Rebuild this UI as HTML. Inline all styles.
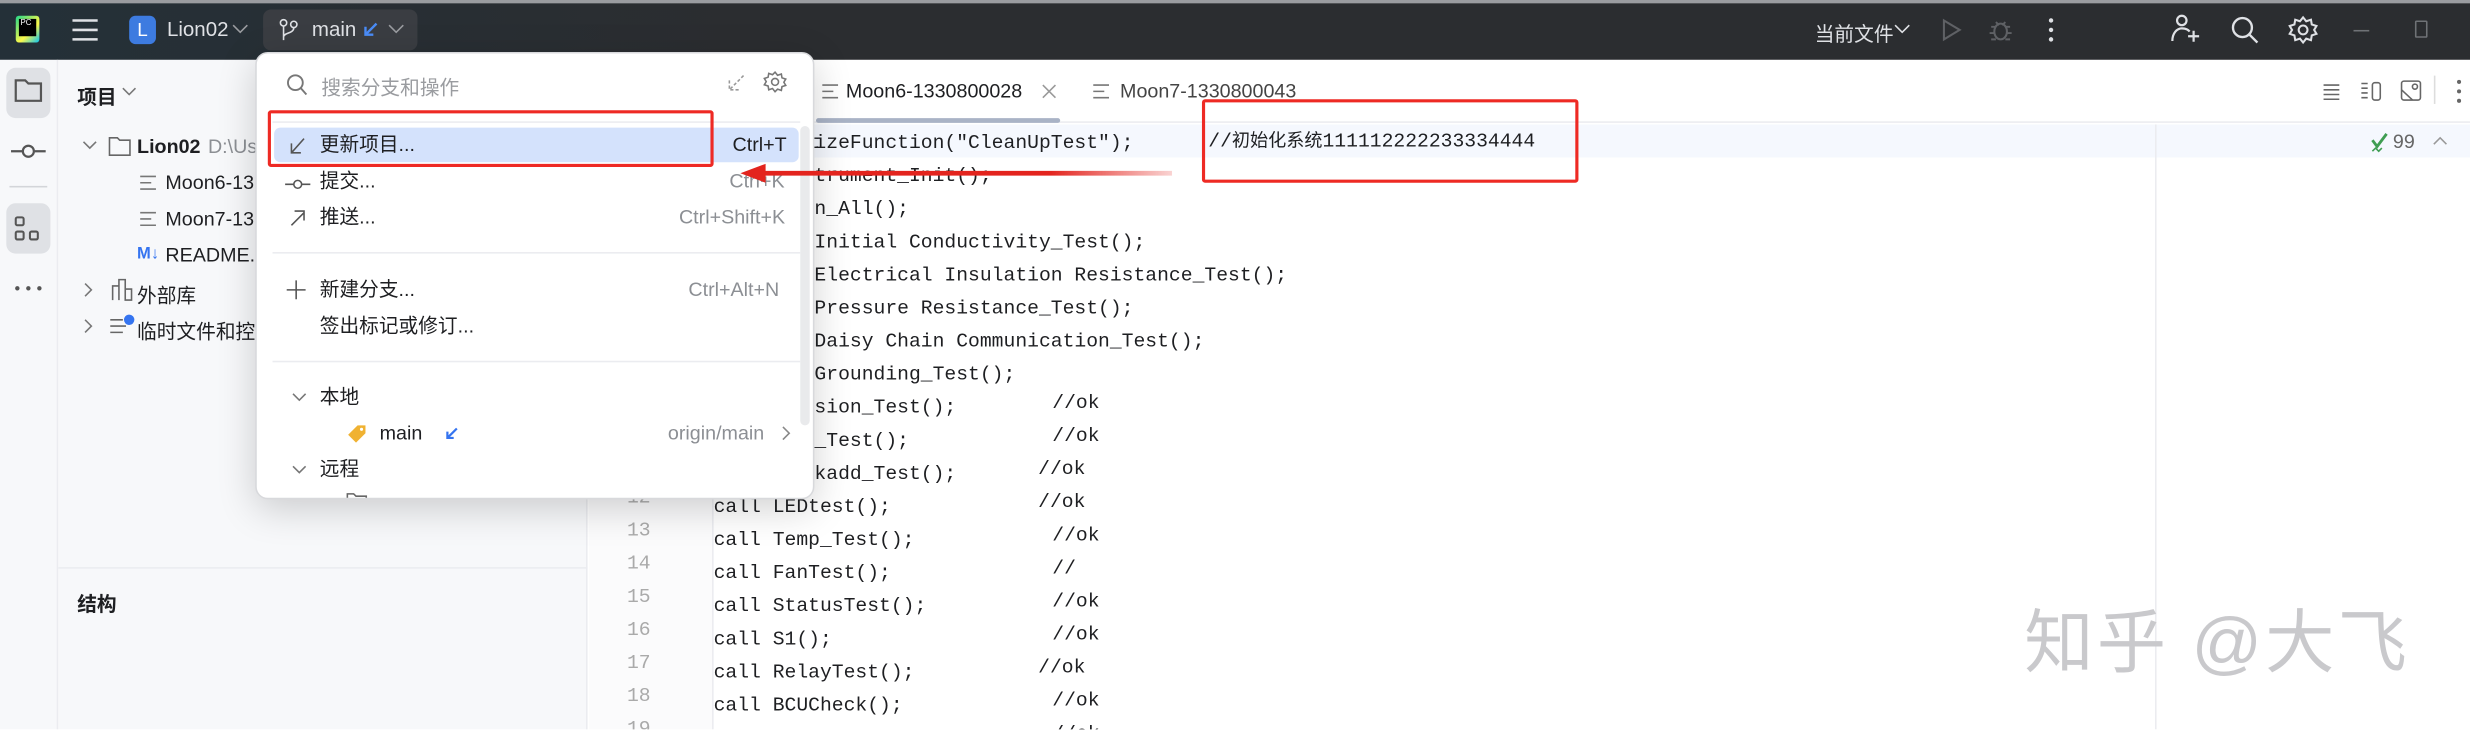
<!DOCTYPE html>
<html><head><meta charset="utf-8"><style>
*{margin:0;padding:0;box-sizing:border-box}
html,body{width:2470px;height:730px;overflow:hidden;background:#fff}
#s{position:absolute;left:0;top:0;width:1568px;height:463px;transform:scale(1.5753);transform-origin:0 0;font-family:"Liberation Sans","Noto Sans CJK SC",sans-serif;font-size:12.5px;color:#1e1f22;overflow:hidden}
.a{position:absolute;white-space:nowrap}
.mono{font-family:"Liberation Mono","Noto Sans CJK SC",monospace;font-size:12.5px}
.g{color:#8c8f94}
.it{position:absolute;left:0;width:354px;height:22px;line-height:22px}
svg{position:absolute;overflow:visible}
</style></head><body><div id="s">
<!-- title bar -->
<div class="a" style="left:0;top:0;width:1568px;height:38px;background:linear-gradient(90deg,#243038 0%,#2b2d30 30%,#2b2d30 100%);border-top:2px solid #9a9ca0"></div>
<div class="a" style="left:10px;top:10px;width:15px;height:17px;background:linear-gradient(135deg,#21d789,#fcf84a 60%,#07c3f2);border-radius:2px"></div>
<div class="a" style="left:12px;top:12px;width:11px;height:11px;background:#000;color:#fff;font-size:5px;line-height:6px;padding-left:1px">PC</div>
<svg style="left:46px;top:12px" width="16" height="14"><path d="M0 1h16M0 7h16M0 13h16" stroke="#dfe1e5" stroke-width="1.6"/></svg>
<div class="a" style="left:82px;top:10px;width:17px;height:18px;background:#3d7be0;border-radius:4px;color:#fff;font-size:12px;text-align:center;line-height:18px">L</div>
<div class="a" style="left:106px;top:11px;color:#dfe1e5;font-size:13px">Lion02</div>
<svg style="left:148px;top:16px" width="9" height="6"><path d="M0 0l4.5 4.5L9 0" fill="none" stroke="#9a9ca0"/></svg>
<div class="a" style="left:167px;top:6px;width:98px;height:26px;background:#3a3d42;border-radius:5px"></div>
<svg style="left:177px;top:12px" width="12" height="14"><circle cx="3" cy="2.5" r="2" fill="none" stroke="#dfe1e5"/><circle cx="9.5" cy="3.5" r="2" fill="none" stroke="#dfe1e5"/><path d="M3 4.5v9M9.5 5.5c0 4-6.5 3-6.5 6" fill="none" stroke="#dfe1e5"/></svg>
<div class="a" style="left:198px;top:11px;color:#dfe1e5;font-size:13px">main</div>
<svg style="left:231px;top:14px" width="9" height="9"><path d="M8 1L1 8M1 3v5h5" fill="none" stroke="#4a8cf7" stroke-width="1.5"/></svg>
<svg style="left:247px;top:16px" width="9" height="6"><path d="M0 0l4.5 4.5L9 0" fill="none" stroke="#9a9ca0"/></svg>
<div class="a" style="left:1152px;top:11px;color:#dfe1e5;font-size:12.5px">当前文件</div>
<svg style="left:1203px;top:16px" width="9" height="6"><path d="M0 0l4.5 4.5L9 0" fill="none" stroke="#dfe1e5"/></svg>
<svg style="left:1233px;top:12px" width="12" height="14"><path d="M1 1l10 6-10 6z" fill="none" stroke="#5f6165" stroke-width="1.3"/></svg>
<svg style="left:1263px;top:11px" width="14" height="16"><ellipse cx="7" cy="9" rx="4" ry="5" fill="none" stroke="#5f6165" stroke-width="1.3"/><path d="M1 6h3M10 6h3M0 10h3M11 10h3M1 14h3M10 14h3M4 3l2 2M10 3l-2 2" stroke="#5f6165" stroke-width="1.2"/></svg>
<svg style="left:1300px;top:11px" width="4" height="16"><circle cx="2" cy="2" r="1.4" fill="#dfe1e5"/><circle cx="2" cy="8" r="1.4" fill="#dfe1e5"/><circle cx="2" cy="14" r="1.4" fill="#dfe1e5"/></svg>
<svg style="left:1378px;top:9px" width="18" height="20"><circle cx="7" cy="4" r="3" fill="none" stroke="#dfe1e5" stroke-width="1.4"/><path d="M1 17c0-5 3-8 6-8s4 1 5 2M11 14h7M14.5 10.5v7" fill="none" stroke="#dfe1e5" stroke-width="1.4"/></svg>
<svg style="left:1416px;top:10px" width="18" height="18"><circle cx="7.5" cy="7.5" r="6" fill="none" stroke="#dfe1e5" stroke-width="1.5"/><path d="M12 12l5 5" stroke="#dfe1e5" stroke-width="1.5"/></svg>
<svg style="left:1453px;top:10px" width="18" height="18"><path d="M9 1l2 2.5 3-1 .5 3 3 1-1.5 2.5 1.5 2.5-3 1-.5 3-3-1L9 17l-2-2.5-3 1-.5-3-3-1L2 9 .5 6.5l3-1 .5-3 3 1z" fill="none" stroke="#dfe1e5" stroke-width="1.3"/><circle cx="9" cy="9" r="2.8" fill="none" stroke="#dfe1e5" stroke-width="1.3"/></svg>
<div class="a" style="left:1494px;top:19px;width:10px;height:1px;background:#6f7276"></div>
<div class="a" style="left:1533px;top:13px;width:8px;height:11px;border:1px solid #6f7276;border-radius:1px"></div>
<!-- left tool strip -->
<div class="a" style="left:0;top:38px;width:37px;height:425px;background:#f7f8fa;border-right:1px solid #ebecf0"></div>
<div class="a" style="left:4px;top:43px;width:28px;height:32px;background:#dfe1e5;border-radius:6px"></div>
<svg style="left:9px;top:50px" width="18" height="15"><path d="M1 1h6l2 2h8v11H1z" fill="none" stroke="#555" stroke-width="1.4"/></svg>
<svg style="left:7px;top:91px" width="22" height="10"><circle cx="11" cy="5" r="3.5" fill="none" stroke="#555" stroke-width="1.4"/><path d="M0 5h7M15 5h7" stroke="#555" stroke-width="1.4"/></svg>
<div class="a" style="left:6px;top:118px;width:24px;height:1px;background:#d3d5d9"></div>
<div class="a" style="left:4px;top:129px;width:28px;height:32px;background:#dfe1e5;border-radius:6px"></div>
<svg style="left:9px;top:137px" width="17" height="17"><rect x="1" y="1" width="5" height="5" rx="1" fill="none" stroke="#555" stroke-width="1.3"/><rect x="1" y="10" width="5" height="5" rx="1" fill="none" stroke="#555" stroke-width="1.3"/><rect x="10" y="10" width="5" height="5" rx="1" fill="none" stroke="#555" stroke-width="1.3"/></svg>
<svg style="left:9px;top:181px" width="18" height="4"><circle cx="2" cy="2" r="1.4" fill="#555"/><circle cx="9" cy="2" r="1.4" fill="#555"/><circle cx="16" cy="2" r="1.4" fill="#555"/></svg>
<!-- project panel -->
<div class="a" style="left:37px;top:38px;width:336px;height:425px;background:#f7f8fa;border-right:1px solid #ebecf0"></div>
<div class="a" style="left:37px;top:360px;width:336px;height:1px;background:#ebecf0"></div>
<div class="a" style="left:49px;top:51px;font-weight:bold;font-size:12.5px">项目</div>
<svg style="left:78px;top:56px" width="8" height="5"><path d="M0 0l4 4 4-4" fill="none" stroke="#777"/></svg>
<div class="a" style="left:49px;top:373px;font-weight:bold">结构</div>
<svg style="left:53px;top:90px" width="8" height="5"><path d="M0 0l4 4 4-4" fill="none" stroke="#777"/></svg>
<svg style="left:69px;top:87px" width="14" height="12"><path d="M.5.5h5l1.5 1.5h6.5v9.5H.5z" fill="none" stroke="#666"/></svg>
<div class="a" style="left:87px;top:86px;font-weight:bold">Lion02</div><div class="a g" style="left:132px;top:86px">D:\Us</div>
<svg style="left:89px;top:111px" width="10" height="10"><path d="M0 1h10M0 5h7M0 9h10" stroke="#777"/></svg><div class="a" style="left:105px;top:109px">Moon6-13</div>
<svg style="left:89px;top:134px" width="10" height="10"><path d="M0 1h10M0 5h7M0 9h10" stroke="#777"/></svg><div class="a" style="left:105px;top:132px">Moon7-13</div>
<div class="a" style="left:87px;top:155px;color:#3574f0;font-weight:bold;font-size:10.5px">M↓</div><div class="a" style="left:105px;top:155px">README.r</div>
<svg style="left:54px;top:180px" width="5" height="8"><path d="M0 0l4 4-4 4" fill="none" stroke="#777"/></svg>
<svg style="left:71px;top:177px" width="13" height="14"><path d="M.5 13.5v-9h4v9M4.5 13.5V.5h4v13M8.5 13.5v-7h4v7z" fill="none" stroke="#666"/></svg>
<div class="a" style="left:87px;top:177px">外部库</div>
<svg style="left:54px;top:203px" width="5" height="8"><path d="M0 0l4 4-4 4" fill="none" stroke="#777"/></svg>
<svg style="left:70px;top:199px" width="16" height="14"><path d="M0 4h8M0 8h10M0 12h8" stroke="#666"/><circle cx="12" cy="4" r="3.3" fill="#3574f0"/></svg>
<div class="a" style="left:87px;top:200px">临时文件和控制</div>
<!-- editor -->
<div class="a" style="left:374px;top:38px;width:1194px;height:40px;background:#fff;border-bottom:1px solid #ebecf0"></div>
<svg style="left:522px;top:53px" width="10" height="10"><path d="M0 1h10M0 5h7M0 9h10" stroke="#777"/></svg>
<div class="a" style="left:537px;top:51px">Moon6-1330800028</div>
<svg style="left:662px;top:54px" width="8" height="8"><path d="M0 0l8 8M8 0L0 8" stroke="#999"/></svg>
<div class="a" style="left:518px;top:75px;width:155px;height:3px;background:#a9b3c6;border-radius:2px"></div>
<svg style="left:694px;top:53px" width="10" height="10"><path d="M0 1h10M0 5h7M0 9h10" stroke="#777"/></svg>
<div class="a" style="left:711px;top:51px;color:#444">Moon7-1330800043</div>
<svg style="left:1475px;top:53px" width="10" height="11"><path d="M0 1h10M0 4h10M0 7h10M0 10h10" stroke="#666"/></svg>
<svg style="left:1499px;top:52px" width="13" height="12"><path d="M0 1h4M0 4h4M0 7h4M0 10h4" stroke="#666"/><rect x="7" y=".5" width="5" height="11" rx="1.5" fill="none" stroke="#666"/></svg>
<svg style="left:1524px;top:51px" width="13" height="13"><rect x=".5" y=".5" width="12" height="12" rx="1.5" fill="none" stroke="#666"/><path d="M.5 6l7 6.5" stroke="#666"/><circle cx="9" cy="4" r="1.6" fill="none" stroke="#666"/></svg>
<div class="a" style="left:1545px;top:48px;width:1px;height:18px;background:#ddd"></div>
<svg style="left:1559px;top:50px" width="4" height="16"><circle cx="2" cy="2" r="1.3" fill="#666"/><circle cx="2" cy="8" r="1.3" fill="#666"/><circle cx="2" cy="14" r="1.3" fill="#666"/></svg>
<div class="a" style="left:374px;top:79px;width:79px;height:384px;background:#fbfbfc;border-right:1px solid #ebecf0"></div>
<div class="a" style="left:453px;top:79px;width:1115px;height:21px;background:#f5f8fe"></div>
<div class="a" style="left:1368px;top:79px;width:1px;height:384px;background:#ebecf0"></div>
<svg style="left:1505px;top:84px" width="11" height="13"><path d="M1 5l3 4 6-8" fill="none" stroke="#3f9d52" stroke-width="1.8"/><path d="M1 12l2-2 2 2 2-2" fill="none" stroke="#3f9d52"/></svg>
<div class="a" style="left:1519px;top:83px;color:#666">99</div>
<svg style="left:1545px;top:87px" width="8" height="5"><path d="M0 4.5l4-4 4 4" fill="none" stroke="#999"/></svg>
<div class="a mono g" style="left:398px;top:309px;color:#aaa">12</div>
<div class="a mono" style="left:398px;top:330px;color:#aaa">13</div>
<div class="a mono" style="left:398px;top:351px;color:#aaa">14</div>
<div class="a mono" style="left:398px;top:372px;color:#aaa">15</div>
<div class="a mono" style="left:398px;top:393px;color:#aaa">16</div>
<div class="a mono" style="left:398px;top:414px;color:#aaa">17</div>
<div class="a mono" style="left:398px;top:435px;color:#aaa">18</div>
<div class="a mono" style="left:398px;top:456px;color:#aaa">19</div>
<div class="a mono" style="left:453px;top:81px;line-height:21px">call Init<br>call Ins<br>call Ru<br>call Run <br>call Run <br>call Run <br>call Run <br>call Run <br>call Ten<br>call Ir<br>call Che<br>call LEDtest();<br>call Temp_Test();<br>call FanTest();<br>call StatusTest();<br>call S1();<br>call RelayTest();<br>call BCUCheck();<br>call VoltageCal();</div>
<div class="a mono" style="left:517px;top:81px;line-height:21px;background:#fff0">izeFunction("CleanUpTest");<br>trument_Init();<br>n_All();<br>Initial Conductivity_Test();<br>Electrical Insulation Resistance_Test();<br>Pressure Resistance_Test();<br>Daisy Chain Communication_Test();<br>Grounding_Test();<br>sion_Test();<br>_Test();<br>kadd_Test();</div>
<div class="a mono" style="left:668px;top:249px">//ok</div>
<div class="a mono" style="left:668px;top:270px">//ok</div>
<div class="a mono" style="left:659px;top:291px">//ok</div>
<div class="a mono" style="left:659px;top:312px">//ok</div>
<div class="a mono" style="left:668px;top:333px">//ok</div>
<div class="a mono" style="left:668px;top:354px">//</div>
<div class="a mono" style="left:668px;top:375px">//ok</div>
<div class="a mono" style="left:668px;top:396px">//ok</div>
<div class="a mono" style="left:659px;top:417px">//ok</div>
<div class="a mono" style="left:668px;top:438px">//ok</div>
<div class="a mono" style="left:668px;top:459px">//ok</div>
<div class="a mono" style="left:767px;top:81px">//<span style="font-size:11.5px">初始化系统</span>111112222233334444</div>
<div class="a" style="left:1285px;top:372px;font-size:44px;color:#c9c9cc;letter-spacing:2px">知乎 @大飞</div>
<!-- popup -->
<div class="a" style="left:162px;top:33px;width:355px;height:284px;background:#fff;border:1px solid #d8d9dc;border-radius:8px;box-shadow:0 6px 24px rgba(0,0,0,.18);overflow:hidden">
 <svg style="left:19px;top:13px" width="13" height="14"><circle cx="5.5" cy="5.5" r="4.7" fill="none" stroke="#777" stroke-width="1.2"/><path d="M9 9l3.5 4" stroke="#777" stroke-width="1.2"/></svg>
 <div class="a" style="left:41px;top:11px;color:#9a9ca0">搜索分支和操作</div>
 <svg style="left:299px;top:13px" width="11" height="11"><path d="M10 1L1 10M1 4v6h6" fill="none" stroke="#999" stroke-dasharray="2 1.3"/></svg>
 <svg style="left:322px;top:11px" width="14" height="14"><path d="M7 .8l1.6 2 2.4-.8.4 2.4 2.4.8-1.2 2 1.2 2-2.4.8-.4 2.4-2.4-.8L7 13.2l-1.6-2-2.4.8-.4-2.4-2.4-.8 1.2-2-1.2-2 2.4-.8.4-2.4 2.4.8z" fill="none" stroke="#777"/><circle cx="7" cy="7" r="2.2" fill="none" stroke="#777"/></svg>
 <div class="a" style="left:10px;top:43px;width:335px;height:1px;background:#ebecf0"></div>
 <div class="a" style="left:11px;top:47px;width:333px;height:22px;background:#d4e2fc;border-radius:4px"></div>
 <div class="a" style="left:345px;top:46px;width:6px;height:190px;background:#e9eaec;border-radius:3px"></div>
 <div class="it" style="top:47px"><svg style="left:21px;top:6px" width="10" height="11"><path d="M9 1L1 10M1 4v6h6" fill="none" stroke="#555"/></svg><span class="a" style="left:40px">更新项目...</span><span class="a" style="left:302px">Ctrl+T</span></div>
 <div class="it" style="top:70px"><svg style="left:18px;top:10px" width="16" height="6"><circle cx="8" cy="3" r="2.5" fill="none" stroke="#555"/><path d="M0 3h5.5M10.5 3h5.5" stroke="#555"/></svg><span class="a" style="left:40px">提交...</span><span class="a g" style="left:300px">Ctrl+K</span></div>
 <div class="it" style="top:93px"><svg style="left:21px;top:6px" width="10" height="11"><path d="M1 10L9 2M3 1h6v6" fill="none" stroke="#555"/></svg><span class="a" style="left:40px">推送...</span><span class="a g" style="left:268px">Ctrl+Shift+K</span></div>
 <div class="a" style="left:10px;top:126px;width:335px;height:1px;background:#ebecf0"></div>
 <div class="it" style="top:139px"><svg style="left:19px;top:5px" width="12" height="12"><path d="M6 0v12M0 6h12" stroke="#555"/></svg><span class="a" style="left:40px">新建分支...</span><span class="a g" style="left:274px">Ctrl+Alt+N</span></div>
 <div class="it" style="top:162px"><span class="a" style="left:40px">签出标记或修订...</span></div>
 <div class="a" style="left:10px;top:195px;width:335px;height:1px;background:#ebecf0"></div>
 <div class="it" style="top:207px"><svg style="left:23px;top:9px" width="8" height="5"><path d="M0 0l4 4 4-4" fill="none" stroke="#777"/></svg><span class="a" style="left:40px">本地</span></div>
 <div class="it" style="top:230px"><svg style="left:57px;top:5px" width="13" height="13"><path d="M7 1h5v5l-6 6-5-5z" fill="#f0b232"/><circle cx="9.5" cy="3.5" r="1" fill="#fff"/></svg><span class="a" style="left:78px">main</span><svg style="left:120px;top:7px" width="8" height="8"><path d="M7 1L1 7M1 3v4h4" fill="none" stroke="#3574f0" stroke-width="1.4"/></svg><span class="a g" style="left:261px">origin/main</span><svg style="left:334px;top:7px" width="5" height="8"><path d="M0 0l4 4-4 4" fill="none" stroke="#888"/></svg></div>
 <div class="it" style="top:253px"><svg style="left:23px;top:9px" width="8" height="5"><path d="M0 0l4 4 4-4" fill="none" stroke="#777"/></svg><span class="a" style="left:40px">远程</span></div>
 <svg style="left:57px;top:279px" width="13" height="8"><path d="M.5 7V.5h4l1.5 1.5h6.5V7" fill="none" stroke="#666"/></svg>
</div>
<!-- annotations -->
<div class="a" style="left:170px;top:70px;width:283px;height:36px;border:2.5px solid #ee2a24;border-radius:2px"></div>
<div class="a" style="left:763px;top:63px;width:239px;height:53px;border:2.5px solid #ee2a24;border-radius:2px"></div>
<svg style="left:470px;top:103px" width="275" height="14"><defs><linearGradient id="lg" x1="0" x2="1"><stop offset="0" stop-color="#e3241e"/><stop offset=".7" stop-color="#e3241e"/><stop offset="1" stop-color="#e3241e" stop-opacity=".2"/></linearGradient></defs><path d="M14 5.5h260v3H14z" fill="url(#lg)"/><path d="M0 7l16-6v12z" fill="#e3241e"/></svg>
</div></body></html>
